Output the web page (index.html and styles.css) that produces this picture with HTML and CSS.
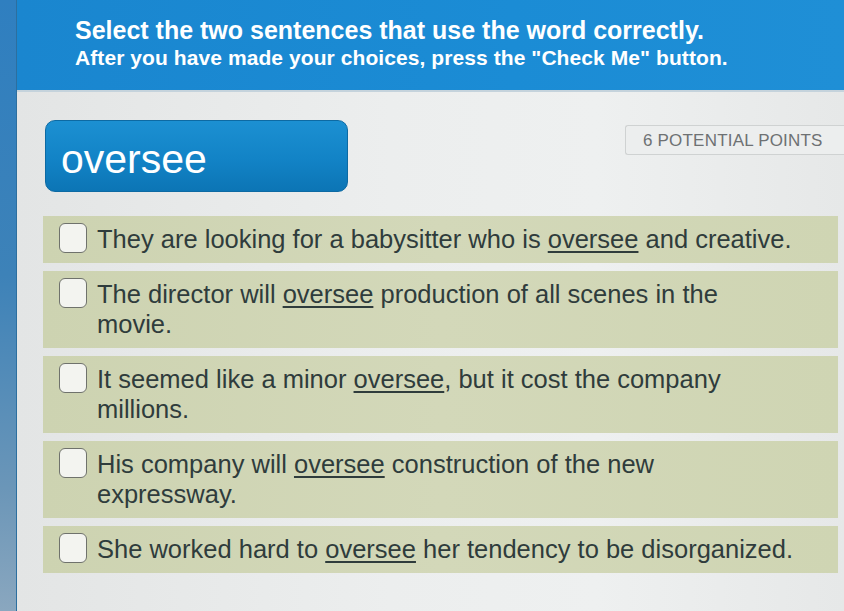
FILE: index.html
```html
<!DOCTYPE html>
<html>
<head>
<meta charset="utf-8">
<link rel="stylesheet" href="styles.css">
</head>
<body>
<div class="page">
  <div class="strip"></div>
  <div class="main">
    <header class="header">
      <h1 class="title">Select the two sentences that use the word correctly.</h1>
      <p class="subtitle">After you have made your choices, press the "Check Me" button.</p>
    </header>
    <section class="content">
      <div class="top">
        <div class="word">oversee</div>
        <div class="points">6 POTENTIAL POINTS</div>
      </div>
      <div class="options">
        <label class="option"><span class="box"></span><span class="text"><span class="line">They are looking for a babysitter who is <u>oversee</u> and creative.</span></span></label>
        <label class="option"><span class="box"></span><span class="text"><span class="line">The director will <u>oversee</u> production of all scenes in the</span><span class="line">movie.</span></span></label>
        <label class="option"><span class="box"></span><span class="text"><span class="line">It seemed like a minor <u>oversee</u>, but it cost the company</span><span class="line">millions.</span></span></label>
        <label class="option"><span class="box"></span><span class="text"><span class="line">His company will <u>oversee</u> construction of the new</span><span class="line">expressway.</span></span></label>
        <label class="option"><span class="box"></span><span class="text"><span class="line">She worked hard to <u>oversee</u> her tendency to be disorganized.</span></span></label>
      </div>
    </section>
  </div>
</div>
</body>
</html>
```
FILE: styles.css
```css
html, body {
  margin: 0;
  padding: 0;
}
body {
  font-family: "Liberation Sans", Arial, sans-serif;
  width: 844px;
  height: 611px;
  overflow: hidden;
  background: #e9ebeb;
}
.page {
  display: flex;
  height: 611px;
}
.strip {
  width: 17px;
  flex: none;
  background: linear-gradient(180deg, #2f7fc0 0%, #3d82b8 45%, #6b96b8 80%, #8aa7bf 100%);
  border-right: 1px solid #2c6f9f;
  box-sizing: border-box;
}
.main {
  flex: 1;
  display: flex;
  flex-direction: column;
}
.header {
  background: linear-gradient(90deg, #1a86cf 0%, #1b8cd5 60%, #1f8fd6 100%);
  height: 92px;
  box-sizing: border-box;
  padding: 15px 0 0 58px;
  color: #fff;
  border-bottom: 2px solid #c5d3dc;
}
.title {
  margin: 0;
  font-size: 25px;
  font-weight: bold;
  line-height: 30px;
}
.subtitle {
  margin: 0;
  font-size: 21px;
  font-weight: bold;
  line-height: 26px;
  letter-spacing: 0.08px;
}
.content {
  flex: 1;
  background: linear-gradient(90deg, #e3e5e5 0%, #eceeee 45%, #eef0f0 70%, #e6e8e8 100%);
  padding: 28px 6px 0 28px;
}
.top {
  display: flex;
  justify-content: space-between;
  align-items: flex-start;
  height: 96px;
}
.word {
  width: 303px;
  height: 72px;
  box-sizing: border-box;
  border-radius: 10px;
  background: linear-gradient(180deg, #1c90d2 0%, #1283c6 55%, #0c75b5 100%);
  border: 1px solid #0d6aa3;
  color: #fff;
  font-size: 41px;
  line-height: 40px;
  padding: 18px 0 0 15px;
}
.points {
  margin-top: 5px;
  margin-right: -6px;
  border: 1px solid #cfd2d2;
  border-right: none;
  border-radius: 3px 0 0 3px;
  background: #eceeee;
  height: 30px;
  box-sizing: border-box;
  padding: 5px 0 0 17px;
  color: #6e7173;
  font-size: 17px;
  line-height: 20px;
  letter-spacing: 0.2px;
  width: 219px;
}
.options {
  display: flex;
  flex-direction: column;
  gap: 8px;
  margin-left: -2px;
}
.option {
  display: flex;
  align-items: flex-start;
  background: linear-gradient(90deg, #cdd3b1 0%, #d3d8b9 50%, #cfd5b3 100%);
  padding: 8px 10px 9px 16px;
}
.box {
  flex: none;
  width: 28px;
  height: 30px;
  margin-top: -1px;
  margin-right: 10px;
  background: #f3f4f0;
  border: 1.5px solid #6f726c;
  border-radius: 6px;
  box-sizing: border-box;
}
.text {
  display: flex;
  flex-direction: column;
  font-size: 25.5px;
  line-height: 30px;
  color: #2f3c3c;
}
.line {
  display: block;
  white-space: nowrap;
}
.text u {
  text-underline-offset: 3px;
  text-decoration-thickness: 2px;
}
```
